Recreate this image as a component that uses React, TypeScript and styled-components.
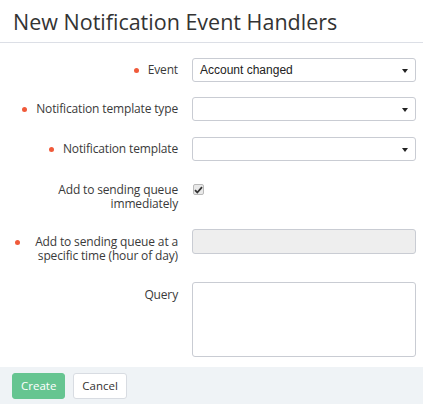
import React from "react";
import styled, { createGlobalStyle } from "styled-components";

const GlobalStyle = createGlobalStyle`
  html, body {
    margin: 0;
    padding: 0;
    background: #ffffff;
  }
  body {
    font-family: "Open Sans", "Liberation Sans", sans-serif;
    color: #333333;
  }
`;

const Page = styled.div`
  width: 423px;
  height: 404px;
  display: flex;
  flex-direction: column;
  overflow: hidden;
`;

const Header = styled.div`
  height: 42px;
  border-bottom: 1px solid #dcdfe6;
  padding-left: 13px;
  display: flex;
  align-items: center;
`;

const Title = styled.h1`
  margin: 0;
  font-size: 21.5px;
  font-weight: 400;
  color: #333;
`;

const Form = styled.form`
  flex: 1;
  display: grid;
  grid-template-columns: 178px 1fr;
  column-gap: 14px;
  padding: 15px 7px 0 0;
  align-content: start;
`;

const Label = styled.div<{ $top?: number }>`
  display: flex;
  justify-content: flex-end;
  align-items: flex-start;
  gap: 9px;
  padding-left: 15px;
  padding-top: ${(p) => p.$top ?? 0}px;
  font-size: 12px;
  letter-spacing: -0.15px;
  line-height: 14px;
  color: #3a3a3a;
`;

const LabelText = styled.span`
  text-align: right;
`;

const Dot = styled.span`
  flex: none;
  width: 5px;
  height: 5px;
  border-radius: 50%;
  background: #f05a3a;
  margin-top: 5px;
`;

const Field = styled.div<{ $gap: number }>`
  margin-bottom: ${(p) => p.$gap}px;
`;

const Select = styled.div`
  height: 24px;
  box-sizing: border-box;
  border: 1px solid #c9ccd3;
  border-radius: 3px;
  background: #fff;
  display: flex;
  align-items: center;
  justify-content: space-between;
  padding: 0 7px 0 7px;
  font-family: "Liberation Sans", Arial, sans-serif;
  font-size: 12px;
  color: #222;
`;

const Caret = styled.span`
  width: 0;
  height: 0;
  border-left: 3px solid transparent;
  border-right: 3px solid transparent;
  border-top: 4px solid #222;
  margin-top: 2px;
`;

const CheckBox = styled.span`
  display: flex;
  align-items: center;
  justify-content: center;
  width: 11px;
  height: 11px;
  margin-left: 1px;
  margin-top: 1px;
  box-sizing: border-box;
  border: 1px solid #b9b9b9;
  border-radius: 2px;
  background: #e9e9e9;
`;

const TextInput = styled.div<{ $disabled?: boolean; $height: number }>`
  height: ${(p) => p.$height}px;
  box-sizing: border-box;
  border: 1px solid #c9ccd3;
  border-radius: 3px;
  background: ${(p) => (p.$disabled ? "#eeeeee" : "#ffffff")};
`;

const Footer = styled.div`
  height: 37px;
  background: #eff3f6;
  display: flex;
  align-items: center;
  gap: 8px;
  padding-left: 12px;
`;

const Button = styled.button<{ $primary?: boolean }>`
  height: 26px;
  box-sizing: border-box;
  padding: 0 8px;
  border-radius: 3px;
  font-family: "Open Sans", sans-serif;
  font-size: 11.5px;
  cursor: pointer;
  border: 1px solid ${(p) => (p.$primary ? "#66c591" : "#d8dce2")};
  background: ${(p) => (p.$primary ? "#66c591" : "#ffffff")};
  color: ${(p) => (p.$primary ? "#ffffff" : "#333333")};
`;

const Required = () => <Dot />;

const App = () => {
  return (
    <Page>
      <GlobalStyle />
      <Header>
        <Title>New Notification Event Handlers</Title>
      </Header>
      <Form onSubmit={(e) => e.preventDefault()}>
        <Label $top={5}>
          <Required />
          <LabelText>Event</LabelText>
        </Label>
        <Field $gap={15}>
          <Select>
            <span>Account changed</span>
            <Caret />
          </Select>
        </Field>

        <Label $top={5}>
          <Required />
          <LabelText>Notification template type</LabelText>
        </Label>
        <Field $gap={16}>
          <Select>
            <span />
            <Caret />
          </Select>
        </Field>

        <Label $top={5}>
          <Required />
          <LabelText>Notification template</LabelText>
        </Label>
        <Field $gap={22}>
          <Select>
            <span />
            <Caret />
          </Select>
        </Field>

        <Label>
          <LabelText>Add to sending queue immediately</LabelText>
        </Label>
        <Field $gap={34}>
          <CheckBox>
            <svg width="9" height="8" viewBox="0 0 9 8">
              <path d="M1 4.2 L3.3 6.5 L8 1.2" fill="none" stroke="#333" strokeWidth="1.8" />
            </svg>
          </CheckBox>
        </Field>

        <Label $top={6}>
          <Required />
          <LabelText>Add to sending queue at a specific time (hour of day)</LabelText>
        </Label>
        <Field $gap={28}>
          <TextInput $disabled $height={25} />
        </Field>

        <Label $top={6}>
          <LabelText>Query</LabelText>
        </Label>
        <Field $gap={0}>
          <TextInput $height={75} />
        </Field>
      </Form>
      <Footer>
        <Button $primary>Create</Button>
        <Button>Cancel</Button>
      </Footer>
    </Page>
  );
};

export default App;
